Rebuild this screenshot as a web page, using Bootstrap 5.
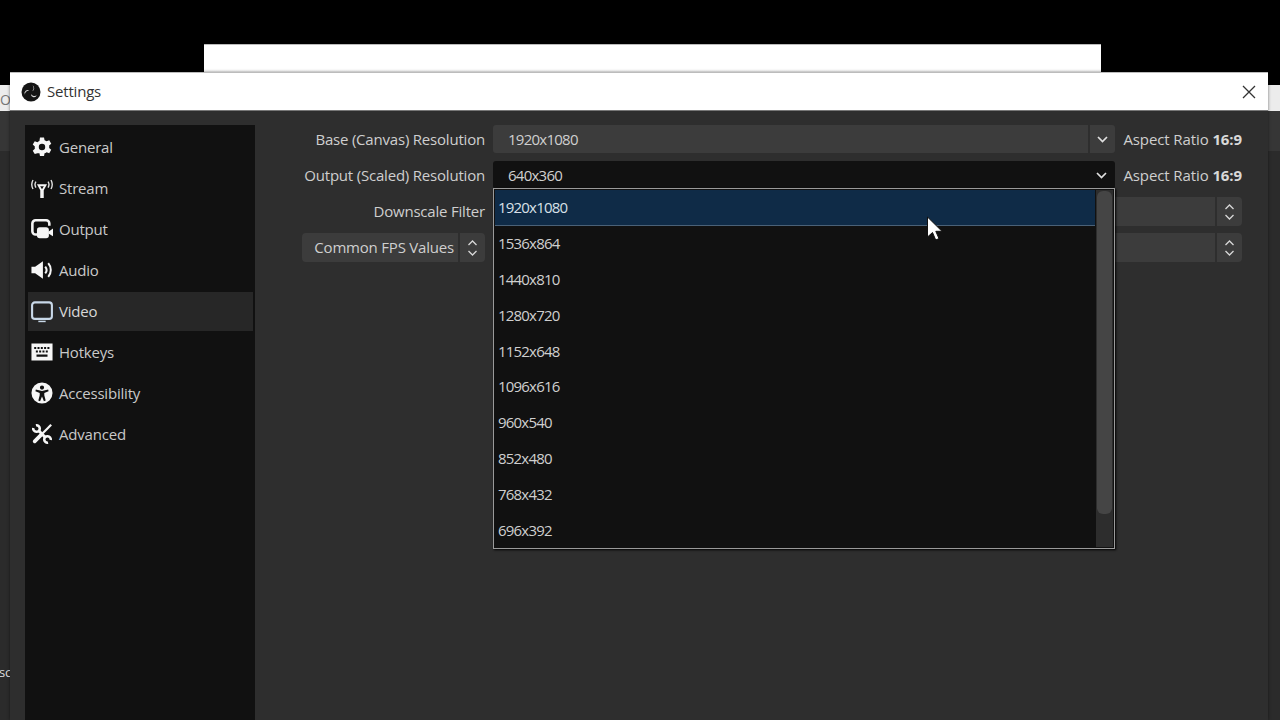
<!DOCTYPE html>
<html lang="en">
<head>
<meta charset="utf-8">
<title>Settings</title>
<link href="https://cdn.jsdelivr.net/npm/bootstrap@5.3.0/dist/css/bootstrap.min.css" rel="stylesheet">
<style>
html,body{height:720px;overflow:hidden;background:#000;}
body{font-family:"Open Sans","Noto Sans",sans-serif;font-size:15px;color:#cfcfcf;position:relative;letter-spacing:-.2px;}
.bg-sheet{position:absolute;left:204px;top:44px;width:897px;height:40px;background:linear-gradient(#fff 65%,#e6e6e6);border-top:1px solid #bbb;}
.bg-win-l,.bg-win-r{position:absolute;top:85px;height:635px;width:14px;background:#2b2b2b;}
.bg-win-l{left:0;overflow:hidden;}
.bg-win-r{right:0;}
.bg-cap{height:26px;background:#ececec;color:#777;font-size:14px;line-height:30px;}
.bg-band{height:40px;background:#363636;}
.bg-sc{position:absolute;left:-1px;top:578px;font-size:13px;color:#ddd;}
.dlg{position:absolute;left:10px;top:72px;width:1258px;height:648px;background:#2e2e2e;box-shadow:0 0 3px rgba(0,0,0,.5);}
.dlg-title{height:39px;background:#fff;color:#333;padding-left:11px;padding-right:12px;border-top:1px solid #bcbcbc;border-bottom:1px solid #777;}
.dlg-title span{margin-left:6px;font-size:15px;}
.dlg-main{height:609px;padding:14px 26px 0 15px;}
.side{width:230px;background:#111;padding:2px 2px 0 3px;flex:none;margin-right:47px;height:595px;}
.side-item{height:41px;padding-left:3px;gap:6px;color:#c9c9c9;padding-bottom:1px;}
.side-item.on{background:#272727;color:#d8d8d8;height:39px;margin:1px 0;padding-bottom:0;}
.side-item svg{width:22px;height:22px;flex:none;}
.setgrid{position:relative;display:grid;grid-template-columns:183px 622px 119px;column-gap:8px;row-gap:8px;grid-auto-rows:28px;align-content:start;flex:none;}
.lab{text-align:right;line-height:28px;white-space:nowrap;}
.cbo{height:28px;line-height:28px;}
.num{letter-spacing:-.75px;}
.cbo-text{flex:1;background:#3c3c3c;padding-left:15px;border-radius:3px 0 0 3px;}
.cbo-btn{width:25px;margin-left:2px;background:#3c3c3c;border-radius:0 3px 3px 0;}
.cbo.dark .cbo-text,.cbo.dark .cbo-btn{background:#111;margin-left:0;}
.cbo.dark .cbo-btn{width:27px;}
.asp{white-space:nowrap;line-height:28px;text-align:right;letter-spacing:-.1px;}
.asp b{font-weight:700;color:#d8d8d8;}
.spin{grid-column:2 / 4;height:29px;}
.spin-f{flex:1;background:#3c3c3c;border-radius:3px 0 0 3px;}
.spin-b{width:25px;margin-left:2px;background:#3c3c3c;border-radius:0 4px 4px 0;}
.fps{height:29px;}
.fps-f{flex:1;background:#3c3c3c;border-radius:4px 0 0 4px;text-align:right;padding-right:4px;line-height:28px;white-space:nowrap;}
.fps-b{width:25px;margin-left:2px;background:#3c3c3c;border-radius:0 4px 4px 0;}
.popup{position:absolute;left:191px;top:63px;width:622px;height:361px;background:#111;border:1px solid #9a9a9a;padding:1px;box-shadow:1px 1px 2px #000;}
.pop-list{flex:1;}
.pop-row{height:35.9px;line-height:35px;padding-left:3px;color:#cfcfcf;letter-spacing:-.8px;}
.pop-row.on{background:#0f2b47;border-bottom:1px solid #4a6177;color:#d8e0e8;margin-right:1px;}
.pop-track{width:17px;background:#2d2d2d;padding:1px;}
.pop-thumb{height:323px;background:#454545;border-radius:6px;}
.mouse{position:absolute;left:926px;top:216px;width:18px;height:26px;}
</style>
</head>
<body>
<div class="bg-sheet"></div>
<div class="bg-win-l"><div class="bg-cap">O</div><div class="bg-band"></div><div class="bg-sc">sc</div></div>
<div class="bg-win-r"><div class="bg-cap"></div><div class="bg-band"></div></div>

<div class="dlg">
  <div class="dlg-title d-flex align-items-center">
    <svg width="20" height="20" viewBox="0 0 20 20"><circle cx="10" cy="10" r="9.500" fill="#151515"/><path d="M11.500 3.300a3.200 3.200 0 0 1 1.700 3.100 3 3 0 0 1-2.300 2.800 3.800 3.800 0 0 0 .6-5.900z M3.900 12.800a3.200 3.200 0 0 1 .8-4 3 3 0 0 1 3.600-.1 3.800 3.800 0 0 0-4.400 4.100z M15.800 13.200a3.200 3.200 0 0 1-3.900 1.800 3 3 0 0 1-1.800-3.100 3.800 3.800 0 0 0 5.700 1.300z" fill="#d8d8d8"/></svg>
    <span>Settings</span>
    <svg class="ms-auto" width="14" height="14" viewBox="0 0 14 14"><path d="M1 1l12 12M13 1L1 13" stroke="#333" stroke-width="1.300" fill="none"/></svg>
  </div>
  <div class="dlg-main d-flex">
    <div class="side">
      <div class="side-item d-flex align-items-center">
        <svg viewBox="0 0 24 24"><path fill="#f6f6f6" fill-rule="evenodd" d="M9.800 1.500h4.400l.6 3a8 8 0 0 1 2.200 1.200l2.900-1 2.200 3.700-2.300 2a8 8 0 0 1 0 2.600l2.300 2-2.200 3.700-2.900-1a8 8 0 0 1-2.200 1.200l-.6 3H9.800l-.6-3A8 8 0 0 1 7 18.700l-2.900 1-2.200-3.700 2.300-2a8 8 0 0 1 0-2.600l-2.300-2 2.200-3.700 2.900 1a8 8 0 0 1 2.200-1.200zM12 8.500a3.500 3.500 0 1 0 0 7 3.500 3.500 0 0 0 0-7z"/></svg>
        <span>General</span></div>
      <div class="side-item d-flex align-items-center">
        <svg viewBox="0 0 24 24"><path fill="#f6f6f6" fill-rule="evenodd" d="M6.500 8h11l-3.600 6.500V23h-3.800v-8.500zM10 10l2 3.400 2-3.400z"/><path fill="none" stroke="#e4e4e4" stroke-width="1.500" d="M5.400 5a6 6 0 0 0 0 6.500M2.200 3.300a10 10 0 0 0 0 9.800M18.600 5a6 6 0 0 1 0 6.500M21.800 3.300a10 10 0 0 1 0 9.800"/></svg>
        <span>Stream</span></div>
      <div class="side-item d-flex align-items-center">
        <svg viewBox="0 0 24 24"><path fill="none" stroke="#f6f6f6" stroke-width="2.800" d="M7 18H5a3.500 3.500 0 0 1-3.500-3.500V6A3.500 3.500 0 0 1 5 2.500h11.500A3.500 3.500 0 0 1 20 6v2.500"/><rect x="6.500" y="10" width="13" height="12" rx="3" fill="#f6f6f6"/><path fill="#f6f6f6" d="M19 15l5-3.500v8.500l-5-3z"/></svg>
        <span>Output</span></div>
      <div class="side-item d-flex align-items-center">
        <svg viewBox="0 0 24 24"><path fill="#f6f6f6" d="M.5 8.500h4L13 2.500v19l-8.500-6h-4z"/><path fill="none" stroke="#f6f6f6" stroke-width="2.200" d="M15.500 8.200a6 6 0 0 1 0 7.600M18.800 4.500a11.500 11.500 0 0 1 0 15"/></svg>
        <span>Audio</span></div>
      <div class="side-item on d-flex align-items-center">
        <svg viewBox="0 0 24 24"><rect x="1.200" y="1.500" width="21.600" height="18" rx="3" fill="#222" stroke="#c8d8e8" stroke-width="2.300"/><path d="M8 22.300h8" stroke="#c8d8e8" stroke-width="1.600"/></svg>
        <span>Video</span></div>
      <div class="side-item d-flex align-items-center">
        <svg viewBox="0 0 24 24"><path fill="#f6f6f6" fill-rule="evenodd" d="M.5 2.800h23v18.400H.5zM3.500 6.500v2.300h2.200V6.500zm3.600 0v2.300h2.200V6.500zm3.600 0v2.300h2.200V6.500zm3.600 0v2.300h2.200V6.500zm3.600 0v2.300h2.200V6.500zM5.300 10.300v2.300h2.200v-2.300zm3.600 0v2.300h2.200v-2.300zm3.600 0v2.300h2.200v-2.300zm3.600 0v2.300h2.200v-2.300zM6 14.700v2.500h12v-2.500z"/></svg>
        <span>Hotkeys</span></div>
      <div class="side-item d-flex align-items-center">
        <svg viewBox="0 0 24 24"><path fill="#f6f6f6" fill-rule="evenodd" d="M12 .5a11.500 11.500 0 1 1 0 23 11.500 11.500 0 0 1 0-23zM12 3.800a2.300 2.300 0 1 0 0 4.600 2.300 2.300 0 0 0 0-4.600zM5.300 8.200 4.800 10l4.700 1.900v2.600L8 20.300l1.900.6 2.100-5 2.100 5 1.900-.6-1.500-5.800v-2.600L19.200 10l-.5-1.800L12 9.800z"/></svg>
        <span>Accessibility</span></div>
      <div class="side-item d-flex align-items-center">
        <svg viewBox="0 0 24 24"><g fill="none" stroke="#f6f6f6"><path stroke-width="2.800" d="M2.450 5.370A3.600 3.600 0 1 0 5.370 2.450"/><path stroke-width="2.800" d="M21.550 18.630A3.600 3.600 0 1 0 18.630 21.550"/><path stroke-width="3.200" d="M8 8l8 8"/><path stroke-width="2.400" d="M22 2L12 12"/><path stroke-width="4" stroke-linecap="round" d="M11 13L4 20"/></g></svg>
        <span>Advanced</span></div>
    </div>
    <div class="setgrid">
      <div class="lab">Base (Canvas) Resolution</div>
      <div class="cbo d-flex">
        <div class="cbo-text num">1920x1080</div>
        <div class="cbo-btn d-flex align-items-center justify-content-center"><svg width="11" height="7" viewBox="0 0 11 7"><path d="M1 1l4.500 4.500L10 1" fill="none" stroke="#e0e0e0" stroke-width="1.700"/></svg></div>
      </div>
      <div class="asp">Aspect Ratio <b>16:9</b></div>

      <div class="lab">Output (Scaled) Resolution</div>
      <div class="cbo dark d-flex">
        <div class="cbo-text num">640x360</div>
        <div class="cbo-btn d-flex align-items-center justify-content-center"><svg width="11" height="7" viewBox="0 0 11 7"><path d="M1 1l4.500 4.500L10 1" fill="none" stroke="#e0e0e0" stroke-width="1.700"/></svg></div>
      </div>
      <div class="asp">Aspect Ratio <b>16:9</b></div>

      <div class="lab">Downscale Filter</div>
      <div class="spin d-flex">
        <div class="spin-f"></div>
        <div class="spin-b d-flex align-items-center justify-content-center"><svg width="11" height="18" viewBox="0 0 11 18"><path d="M1.500 6l4-4 4 4M1.500 12l4 4 4-4" fill="none" stroke="#d8d8d8" stroke-width="1.300"/></svg></div>
      </div>

      <div class="fps d-flex">
        <div class="fps-f">Common FPS Values</div>
        <div class="fps-b d-flex align-items-center justify-content-center"><svg width="11" height="18" viewBox="0 0 11 18"><path d="M1.500 6l4-4 4 4M1.500 12l4 4 4-4" fill="none" stroke="#d8d8d8" stroke-width="1.300"/></svg></div>
      </div>
      <div class="spin d-flex">
        <div class="spin-f"></div>
        <div class="spin-b d-flex align-items-center justify-content-center"><svg width="11" height="18" viewBox="0 0 11 18"><path d="M1.500 6l4-4 4 4M1.500 12l4 4 4-4" fill="none" stroke="#d8d8d8" stroke-width="1.300"/></svg></div>
      </div>

      <div class="popup d-flex">
        <div class="pop-list">
          <div class="pop-row on">1920x1080</div>
          <div class="pop-row">1536x864</div>
          <div class="pop-row">1440x810</div>
          <div class="pop-row">1280x720</div>
          <div class="pop-row">1152x648</div>
          <div class="pop-row">1096x616</div>
          <div class="pop-row">960x540</div>
          <div class="pop-row">852x480</div>
          <div class="pop-row">768x432</div>
          <div class="pop-row">696x392</div>
        </div>
        <div class="pop-track"><div class="pop-thumb"></div></div>
      </div>
    </div>
  </div>
</div>
<svg class="mouse" viewBox="0 0 18 26"><path d="M1.500 1v20l5-4.500 3.200 7.500 3.300-1.400-3.200-7.300H16z" fill="#fff" stroke="#111" stroke-width="1"/></svg>
</body>
</html>
